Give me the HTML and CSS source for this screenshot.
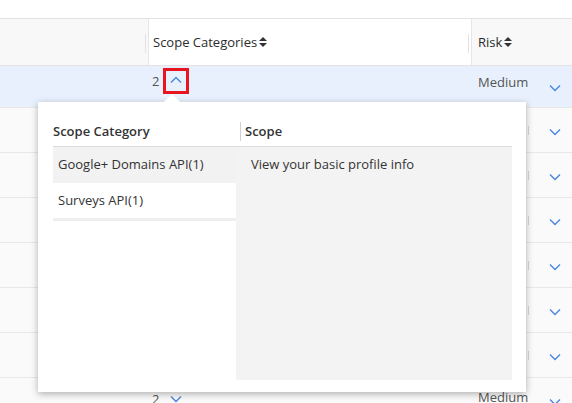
FILE: index.html
```html
<!DOCTYPE html>
<html lang="en">
<head>
  <title>Apps</title>
  <link rel="stylesheet" href="styles.css">
</head>
<body>

  <div class="grid">
    <div class="head">
      <div class="cell c1"><span class="resizer"></span></div>
      <div class="cell c2">Scope Categories <span class="sort"></span><span class="resizer"></span></div>
      <div class="cell c3">Risk <span class="sort"></span></div>
      <div class="cell c4"></div>
    </div>

    <div class="row selected first">
      <div class="cell c1"></div>
      <div class="cell c2">2
        <span class="toggle open">
          <svg width="12" height="8" viewBox="0 0 12 8"><path d="M1 6.5 L6 1.5 L11 6.5" fill="none" stroke="#4a86e0" stroke-width="1.4"/></svg>
        </span>
      </div>
      <div class="cell c3">Medium</div>
      <div class="cell c4"><svg class="chev" width="12" height="8" viewBox="0 0 12 8"><path d="M1 1.5 L6 6.5 L11 1.5" fill="none" stroke="#4a86e0" stroke-width="1.4"/></svg></div>
    </div>

    <div class="row"><div class="cell c1"></div><div class="cell c2"></div><div class="cell c3"><span class="resizer"></span></div><div class="cell c4"><svg class="chev" width="12" height="8" viewBox="0 0 12 8"><path d="M1 1.5 L6 6.5 L11 1.5" fill="none" stroke="#4a86e0" stroke-width="1.4"/></svg></div></div>
    <div class="row"><div class="cell c1"></div><div class="cell c2"></div><div class="cell c3"><span class="resizer"></span></div><div class="cell c4"><svg class="chev" width="12" height="8" viewBox="0 0 12 8"><path d="M1 1.5 L6 6.5 L11 1.5" fill="none" stroke="#4a86e0" stroke-width="1.4"/></svg></div></div>
    <div class="row"><div class="cell c1"></div><div class="cell c2"></div><div class="cell c3"><span class="resizer"></span></div><div class="cell c4"><svg class="chev" width="12" height="8" viewBox="0 0 12 8"><path d="M1 1.5 L6 6.5 L11 1.5" fill="none" stroke="#4a86e0" stroke-width="1.4"/></svg></div></div>
    <div class="row"><div class="cell c1"></div><div class="cell c2"></div><div class="cell c3"><span class="resizer"></span></div><div class="cell c4"><svg class="chev" width="12" height="8" viewBox="0 0 12 8"><path d="M1 1.5 L6 6.5 L11 1.5" fill="none" stroke="#4a86e0" stroke-width="1.4"/></svg></div></div>
    <div class="row"><div class="cell c1"></div><div class="cell c2"></div><div class="cell c3"><span class="resizer"></span></div><div class="cell c4"><svg class="chev" width="12" height="8" viewBox="0 0 12 8"><path d="M1 1.5 L6 6.5 L11 1.5" fill="none" stroke="#4a86e0" stroke-width="1.4"/></svg></div></div>
    <div class="row"><div class="cell c1"></div><div class="cell c2"></div><div class="cell c3"><span class="resizer"></span></div><div class="cell c4"><svg class="chev" width="12" height="8" viewBox="0 0 12 8"><path d="M1 1.5 L6 6.5 L11 1.5" fill="none" stroke="#4a86e0" stroke-width="1.4"/></svg></div></div>

    <div class="row last">
      <div class="cell c1"></div>
      <div class="cell c2">2
        <span class="toggle">
          <svg width="12" height="8" viewBox="0 0 12 8"><path d="M1 1.5 L6 6.5 L11 1.5" fill="none" stroke="#4a86e0" stroke-width="1.4"/></svg>
        </span>
      </div>
      <div class="cell c3">Medium</div>
      <div class="cell c4"><svg class="chev" width="12" height="8" viewBox="0 0 12 8"><path d="M1 1.5 L6 6.5 L11 1.5" fill="none" stroke="#4a86e0" stroke-width="1.4"/></svg></div>
    </div>
  </div>

  <!-- scope popup opened from the first row -->
  <div class="popup">
    <span class="caret"></span>
    <div class="popup-head">
      <div class="ph-cat">Scope Category</div>
      <div class="ph-scope">Scope</div>
    </div>
    <div class="popup-body">
      <div class="cat-list">
        <div class="cat active">Google+ Domains API(1)</div>
        <div class="cat">Surveys API(1)</div>
        <div class="cat-end"></div>
      </div>
      <div class="scopes">
        <div class="scope">View your basic profile info</div>
      </div>
    </div>
  </div>

</body>
</html>
```

FILE: styles.css
```css
body {
  margin: 0;
  font-family: "Open Sans", sans-serif;
  font-size: 13px;
  color: #555;
  background: #fff;
  overflow: hidden;
}

.grid {
  margin-top: 18px;
  border-top: 1px solid #e3e3e3;
}

.head, .row {
  display: flex;
}

.cell {
  display: flex;
  align-items: center;
  position: relative;
  box-sizing: border-box;
}

.c1 { width: 148px; }
.c2 { width: 324px; padding-left: 4px; }
.c3 { width: 58px; padding-left: 6px; }
.c4 { width: 42px; justify-content: flex-end; padding-right: 11px; }

.head {
  height: 46px;
  background: #f8f8f8;
  color: #2b2b2b;
  border-bottom: 1px solid #e3e3e3;
}

.head .c2 {
  background: #fff;
  border-left: 1px solid #e6e6e6;
  border-right: 1px solid #e6e6e6;
}

.head .c3 { padding-left: 6px; }

.resizer {
  position: absolute;
  right: 2px;
  top: 15px;
  width: 1px;
  height: 19px;
  background: #e2e2e2;
}

.row .c3 .resizer {
  right: 1px;
  top: 18px;
  height: 9px;
  background: #d8d8d8;
}

.sort {
  display: inline-block;
  width: 8px;
  height: 10px;
  margin-left: 2px;
  position: relative;
}

.sort::before, .sort::after {
  content: "";
  position: absolute;
  left: 0;
  border-left: 4px solid transparent;
  border-right: 4px solid transparent;
}

.sort::before { top: 0; border-bottom: 4px solid #333; }
.sort::after { top: 6px; border-top: 4px solid #333; }

.row {
  height: 45px;
  background: #fafafa;
  border-bottom: 1px solid #e8e8e8;
  box-sizing: border-box;
}

.row.first { height: 42px; }

.row.selected { background: #e7f0fc; }

.row .c2 { align-items: flex-start; padding-top: 2px; }
.row .c3 { align-items: flex-start; padding-top: 7px; }
.row .c4 svg { margin-top: 3px; }

.row.last .c3 { padding-top: 10px; }
.row.last .c2 { padding-top: 8px; }

.toggle {
  display: inline-flex;
  align-items: center;
  justify-content: center;
  width: 26px;
  height: 26px;
  margin-left: 4px;
  box-sizing: border-box;
}

.row .c2 { line-height: 26px; }

.toggle.open { border: 3px solid #e8141f; }

.toggle.open svg { margin-top: -2px; }

.popup {
  position: absolute;
  left: 38px;
  top: 102px;
  width: 488px;
  height: 290px;
  background: #fff;
  box-shadow: 0 2px 7px rgba(0, 0, 0, 0.3);
  padding: 14px 14px 12px 15px;
  box-sizing: border-box;
  display: flex;
  flex-direction: column;
  color: #333;
}

.caret {
  position: absolute;
  top: -8px;
  left: 126px;
  border-left: 8px solid transparent;
  border-right: 8px solid transparent;
  border-bottom: 8px solid #fff;
}

.popup-head {
  display: flex;
  height: 30px;
  align-items: center;
  border-bottom: 1px solid #dcdcdc;
  font-weight: 600;
}

.ph-cat { width: 187px; }

.ph-scope {
  border-left: 1px solid #cfcfcf;
  padding-left: 4px;
  height: 19px;
  line-height: 19px;
}

.popup-body {
  flex: 1;
  display: flex;
}

.cat-list { width: 183px; }

.cat {
  height: 36px;
  line-height: 34px;
  padding-left: 5px;
  color: #333;
}

.cat.active { background: #f2f2f2; }

.cat + .cat { height: 35px; }

.cat-end {
  height: 3px;
  background: #eeeeee;
}

.scopes {
  flex: 1;
  background: #f3f3f3;
  padding-left: 15px;
}

.scope {
  height: 36px;
  line-height: 34px;
}
```
